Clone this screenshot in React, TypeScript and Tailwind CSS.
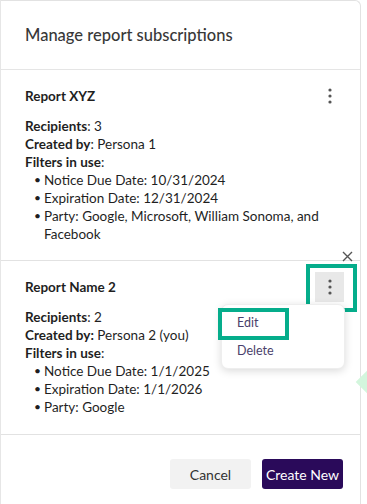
import React from "react";

function Kebab() {
  return (
    <svg width="4" height="16" viewBox="0 0 4 16" fill="#555">
      <circle cx="2" cy="2" r="1.6" />
      <circle cx="2" cy="8" r="1.6" />
      <circle cx="2" cy="14" r="1.6" />
    </svg>
  );
}

function Row({ label, value }: { label: string; value: string }) {
  return (
    <div className="h-[18px] leading-[18px]">
      <span className="font-bold">{label}</span>
      {value}
    </div>
  );
}

function Bullet({ children }: { children: React.ReactNode }) {
  return (
    <li className="flex leading-[18px]">
      <span className="w-[19px] shrink-0 pl-[9px] text-[12px]">•</span>
      <span>{children}</span>
    </li>
  );
}

export default function App() {
  return (
    <div
      className="relative w-[367px] h-[504px] overflow-hidden bg-white flex text-[13.5px] text-[#1f1f1f]"
      style={{ fontFamily: "Lato, 'Noto Sans', sans-serif" }}
    >
      <div className="w-[1px] shrink-0 bg-[#e6e6e6]" />
      <div className="w-[360px] shrink-0 flex flex-col border-r border-t border-[#e2e2e2] rounded-tr-[6px] bg-white">
        <div className="h-[69px] shrink-0 flex items-center px-[24px] border-b border-[#e5e5e5]">
          <h1 className="text-[16.5px] font-medium text-[#383838]">Manage report subscriptions</h1>
        </div>

        <section className="relative pt-[17px] pb-[17px] pl-[24px] pr-[24px] border-b border-[#e2e2e2]">
          <div className="flex items-center justify-between h-[18px]">
            <div className="font-bold">Report XYZ</div>
            <div className="w-[29px] h-[29px] flex items-center justify-center mr-[-8px]">
              <Kebab />
            </div>
          </div>
          <div className="mt-[12px]">
            <Row label="Recipients" value=": 3" />
            <Row label="Created by" value=": Persona 1" />
            <Row label="Filters in use" value=":" />
            <ul>
              <Bullet>Notice Due Date: 10/31/2024</Bullet>
              <Bullet>Expiration Date: 12/31/2024</Bullet>
              <Bullet>
                Party: Google, Microsoft, William Sonoma, and
                <br />
                Facebook
              </Bullet>
            </ul>
          </div>
        </section>

        <section className="relative pt-[17px] pb-[18px] pl-[24px] pr-[24px] border-b border-[#e2e2e2]">
          <div className="flex items-center justify-between h-[18px]">
            <div className="font-bold">Report Name 2</div>
            <div className="relative mr-[-8px]">
              <div className="absolute left-[-9px] top-[-8px] w-[51px] h-[48px] border-[4px] border-[#05ad8b]" />
              <div className="relative w-[29px] h-[30px] flex items-center justify-center bg-[#e8e8e8]">
                <Kebab />
              </div>
            </div>
          </div>
          <div className="mt-[12px]">
            <Row label="Recipients" value=": 2" />
            <Row label="Created by:" value=" Persona 2 (you)" />
            <Row label="Filters in use" value=":" />
            <ul>
              <Bullet>Notice Due Date: 1/1/2025</Bullet>
              <Bullet>Expiration Date: 1/1/2026</Bullet>
              <Bullet>Party: Google</Bullet>
            </ul>
          </div>
        </section>

        <div className="flex-1 flex items-start justify-end gap-[11px] pt-[24px] pr-[17px]">
          <button className="w-[81px] h-[30px] rounded-[3px] bg-[#f2f2f2] text-[14px] text-[#333]">Cancel</button>
          <button className="w-[81px] h-[30px] rounded-[3px] bg-[#2a0a5a] text-[14px] text-white">Create New</button>
        </div>
      </div>
      <div className="flex-1" />

      {/* close X */}
      <svg className="absolute left-[342px] top-[251px]" width="11" height="11" viewBox="0 0 11 11" stroke="#555" strokeWidth="1.4">
        <path d="M1 1 L10 10 M10 1 L1 10" />
      </svg>

      {/* dropdown menu */}
      <div className="absolute left-[221px] top-[304px] w-[124px] h-[65px] rounded-[7px] bg-white shadow-[0_2px_8px_rgba(0,0,0,0.15)] border border-[#eee] text-[12.5px] text-[#4a3f6b]">
        <div className="absolute left-[15px] top-[9px] leading-[18px]">Edit</div>
        <div className="absolute left-[15px] top-[37px] leading-[18px]">Delete</div>
      </div>
      <div className="absolute left-[218px] top-[308px] w-[71px] h-[32px] border-[4px] border-[#05ad8b]" />

      {/* background diamond */}
      <div className="absolute left-[359px] top-[374px] w-[16px] h-[16px] rotate-45 bg-[#d3f6dd]" />
    </div>
  );
}
